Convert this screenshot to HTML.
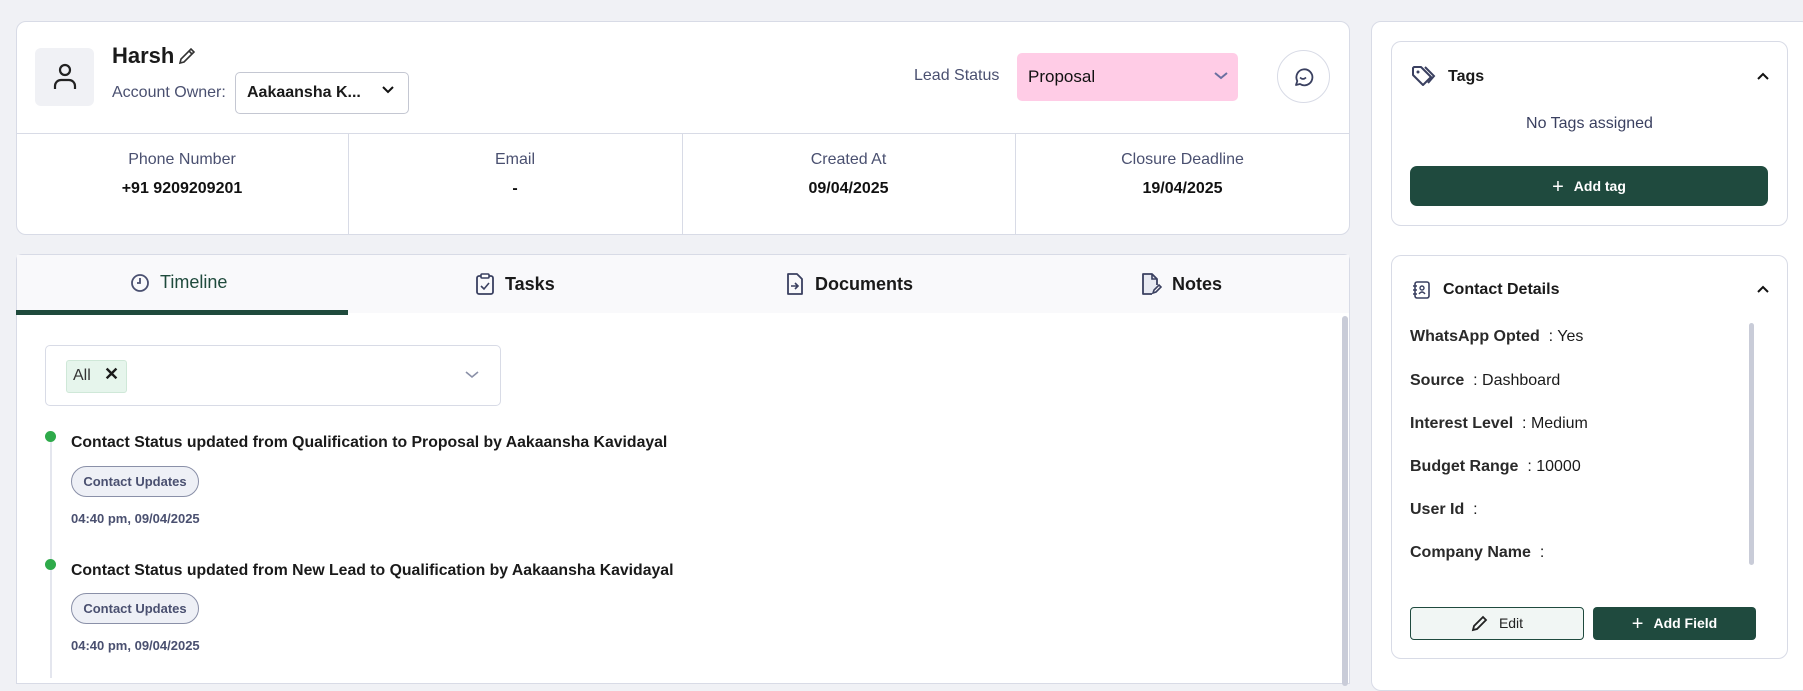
<!DOCTYPE html>
<html><head><meta charset="utf-8"><style>
*{box-sizing:border-box;margin:0;padding:0}
body{width:1803px;height:675px;overflow:hidden;background:#f0f1f5;font-family:"Liberation Sans",sans-serif;position:relative;color:#1a1a1a}
.abs{position:absolute}
.card{position:absolute;background:#fff;border:1px solid #d8dbe6;border-radius:10px}
.lbl{color:#4a5070;font-size:16px}
.val{font-weight:bold;font-size:16px;color:#111}
.stat{position:absolute;top:133px;height:101px;text-align:center}
.tab{position:absolute;top:272px;font-size:18px;font-weight:bold;color:#1a1a1a;display:flex;align-items:center;gap:10px}
.chip{position:absolute;left:71px;width:128px;height:31px;border:1px solid #8a90a8;border-radius:16px;background:#eef0f6;color:#4a5070;font-size:13px;font-weight:bold;text-align:center;line-height:29px}
.ttl{position:absolute;left:71px;font-size:15.8px;font-weight:bold;color:#1a1a1a}
.tm{position:absolute;left:71px;font-size:13px;font-weight:bold;color:#4a5070}
.dot{position:absolute;left:45px;width:11px;height:11px;border-radius:50%;background:#2eaa4a}
.row{position:absolute;left:1410px;font-size:16px;color:#1a1a1a}
.row b{font-weight:bold;color:#2a2a2a}
</style></head><body>
<div class="card" style="left:16px;top:21px;width:1334px;height:214px"></div>
<div class="abs" style="left:16px;top:133px;width:1334px;height:1px;background:#d8dbe6"></div>
<div class="abs" style="left:35px;top:48px;width:59px;height:58px;background:#f0f1f5;border-radius:6px"></div>
<svg class="abs" style="left:52px;top:63px" width="26" height="28" viewBox="0 0 26 28"><circle cx="13" cy="7" r="5" fill="none" stroke="#222" stroke-width="2.2"/><path d="M3 26v-3a6 6 0 0 1 6-6h8a6 6 0 0 1 6 6v3" fill="none" stroke="#222" stroke-width="2.2"/></svg>
<div class="abs" style="left:112px;top:43px;font-size:22px;font-weight:bold;color:#1a1a1a">Harsh</div>
<svg class="abs" style="left:177px;top:46px" width="20" height="20" viewBox="0 0 20 20"><path d="M3 17l1-4L14 3l3 3L7 16z M12 5l3 3" fill="none" stroke="#333" stroke-width="1.6"/></svg>
<div class="abs lbl" style="left:112px;top:84px">Account Owner:</div>
<div class="abs" style="left:235px;top:72px;width:174px;height:42px;border:1px solid #c4c7d2;border-radius:5px"></div>
<div class="abs" style="left:247px;top:84px;font-size:16px;font-weight:bold">Aakaansha K...</div>
<svg class="abs" style="left:381px;top:85px" width="14" height="10" viewBox="0 0 14 10"><path d="M2 2l5 5 5-5" fill="none" stroke="#111" stroke-width="2"/></svg>
<div class="abs lbl" style="left:914px;top:67px">Lead Status</div>
<div class="abs" style="left:1017px;top:53px;width:221px;height:48px;background:#ffcce6;border-radius:5px"></div>
<div class="abs" style="left:1028px;top:67px;font-size:17px;color:#111">Proposal</div>
<svg class="abs" style="left:1213px;top:71px" width="16" height="10" viewBox="0 0 16 10"><path d="M2 2l6 5 6-5" fill="none" stroke="#6a70a0" stroke-width="2"/></svg>
<div class="abs" style="left:1277px;top:50px;width:53px;height:53px;border:1px solid #d8dbe6;border-radius:50%"></div>
<svg class="abs" style="left:1292px;top:66px" width="22" height="22" viewBox="0 0 22 22"><path d="M4 19l1.3-4A8 8 0 1 1 8 18z" fill="none" stroke="#3a4060" stroke-width="1.8" stroke-linejoin="round"/><path d="M8 11.5q3 3 6 0" fill="none" stroke="#3a4060" stroke-width="1.6"/></svg>
<div class="abs" style="left:348px;top:134px;width:1px;height:100px;background:#d8dbe6"></div>
<div class="abs" style="left:682px;top:134px;width:1px;height:100px;background:#d8dbe6"></div>
<div class="abs" style="left:1015px;top:134px;width:1px;height:100px;background:#d8dbe6"></div>
<div class="stat" style="left:16px;width:332px"><div class="lbl" style="margin-top:18px">Phone Number</div><div class="val" style="margin-top:11px">+91 9209209201</div></div>
<div class="stat" style="left:348px;width:334px"><div class="lbl" style="margin-top:18px">Email</div><div class="val" style="margin-top:11px">-</div></div>
<div class="stat" style="left:682px;width:333px"><div class="lbl" style="margin-top:18px">Created At</div><div class="val" style="margin-top:11px">09/04/2025</div></div>
<div class="stat" style="left:1015px;width:335px"><div class="lbl" style="margin-top:18px">Closure Deadline</div><div class="val" style="margin-top:11px">19/04/2025</div></div>

<div class="abs" style="left:16px;top:254px;width:1334px;height:430px;background:#fff;border:1px solid #d8dbe6;border-radius:6px 6px 0 0"></div>
<div class="abs" style="left:17px;top:255px;width:1332px;height:58px;background:#f9f9fb"></div>
<div class="abs" style="left:16px;top:310px;width:332px;height:5px;background:#1f4a3c"></div>
<div class="tab" style="left:130px;color:#1f4a3c;font-weight:normal"><svg width="20" height="20" viewBox="0 0 20 20"><circle cx="10" cy="10" r="8" fill="none" stroke="#4a5070" stroke-width="1.8"/><path d="M10 5v5H7" fill="none" stroke="#4a5070" stroke-width="1.8"/></svg><span style="font-weight:500">Timeline</span></div>
<div class="tab" style="left:475px"><svg width="20" height="24" viewBox="0 0 20 24"><rect x="2" y="4" width="16" height="18" rx="2" fill="none" stroke="#3a4060" stroke-width="1.8"/><rect x="6" y="2" width="8" height="4" rx="1" fill="#fff" stroke="#3a4060" stroke-width="1.6"/><path d="M6 14l3 3 5-6" fill="none" stroke="#3a4060" stroke-width="1.6"/></svg>Tasks</div>
<div class="tab" style="left:785px"><svg width="20" height="24" viewBox="0 0 20 24"><path d="M3 2h9l5 5v15H3z" fill="none" stroke="#3a4060" stroke-width="1.8" stroke-linejoin="round"/><path d="M6 14h7M10 11l3 3-3 3" fill="none" stroke="#3a4060" stroke-width="1.6"/></svg>Documents</div>
<div class="tab" style="left:1140px"><svg width="22" height="24" viewBox="0 0 22 24"><path d="M12 22H3V2h9l5 5v6" fill="#e8eaf2" stroke="#3a4060" stroke-width="1.8" stroke-linejoin="round"/><path d="M12 2v5h5M13 21l1-3 5-5 2 2-5 5z" fill="none" stroke="#3a4060" stroke-width="1.6"/></svg>Notes</div>
<div class="abs" style="left:1342px;top:316px;width:6px;height:370px;background:#c9ccd8;border-radius:3px"></div>
<div class="abs" style="left:45px;top:345px;width:456px;height:61px;border:1px solid #d8dbe6;border-radius:5px"></div>
<div class="abs" style="left:66px;top:360px;width:61px;height:33px;background:#e6f5ec;border:1px solid #cfe8d8;border-radius:3px"></div>
<div class="abs" style="left:73px;top:367px;font-size:16px;color:#333">All</div>
<div class="abs" style="left:104px;top:364px;font-size:18px;font-weight:bold">✕</div>
<svg class="abs" style="left:464px;top:370px" width="16" height="10" viewBox="0 0 16 10"><path d="M2 2l6 5 6-5" fill="none" stroke="#8a90a8" stroke-width="1.6"/></svg>
<div class="abs" style="left:50px;top:438px;width:2px;height:240px;background:#e4e6ee"></div>
<div class="dot" style="top:431px"></div>
<div class="ttl" style="top:434px">Contact Status updated from Qualification to Proposal by Aakaansha Kavidayal</div>
<div class="chip" style="top:466px">Contact Updates</div>
<div class="tm" style="top:511px">04:40 pm, 09/04/2025</div>
<div class="dot" style="top:559px"></div>
<div class="ttl" style="top:562px">Contact Status updated from New Lead to Qualification by Aakaansha Kavidayal</div>
<div class="chip" style="top:593px">Contact Updates</div>
<div class="tm" style="top:638px">04:40 pm, 09/04/2025</div>

<div class="abs" style="left:1371px;top:21px;width:440px;height:670px;background:#fff;border:1px solid #d8dbe6;border-radius:10px"></div>
<div class="card" style="left:1391px;top:41px;width:397px;height:185px"></div>
<svg class="abs" style="left:1411px;top:65px" width="26" height="22" viewBox="0 0 26 22"><path d="M2 3v7l10 10 8-8L10 2H3z" fill="none" stroke="#3a4060" stroke-width="2" stroke-linejoin="round"/><circle cx="7" cy="7" r="1.5" fill="#3a4060"/><path d="M14 2l9 9-6 7" fill="none" stroke="#3a4060" stroke-width="2"/></svg>
<div class="abs" style="left:1448px;top:68px;font-size:16px;font-weight:bold">Tags</div>
<svg class="abs" style="left:1756px;top:72px" width="14" height="9" viewBox="0 0 14 9"><path d="M2 7l5-5 5 5" fill="none" stroke="#111" stroke-width="2"/></svg>
<div class="abs" style="left:1391px;top:115px;width:397px;text-align:center;font-size:16px;color:#3a4060">No Tags assigned</div>
<div class="abs" style="left:1410px;top:166px;width:358px;height:40px;background:#1f4a3e;border-radius:7px;color:#fff;font-size:14px;font-weight:bold;text-align:center;line-height:40px"><span style="font-size:20px;font-weight:normal;vertical-align:-2px;margin-right:10px">+</span>Add tag</div>

<div class="card" style="left:1391px;top:255px;width:397px;height:404px"></div>
<svg class="abs" style="left:1411px;top:280px" width="20" height="20" viewBox="0 0 20 20"><rect x="4" y="2" width="14" height="16" rx="2" fill="none" stroke="#3a4060" stroke-width="1.6"/><circle cx="11" cy="8" r="2" fill="none" stroke="#3a4060" stroke-width="1.4"/><path d="M8 14q3-4 6 0M2 6h4M2 10h4M2 14h4" fill="none" stroke="#3a4060" stroke-width="1.4"/></svg>
<div class="abs" style="left:1443px;top:281px;font-size:16px;font-weight:bold">Contact Details</div>
<svg class="abs" style="left:1756px;top:285px" width="14" height="9" viewBox="0 0 14 9"><path d="M2 7l5-5 5 5" fill="none" stroke="#111" stroke-width="2"/></svg>
<div class="abs" style="left:1749px;top:323px;width:5px;height:242px;background:#c9ccd8;border-radius:3px"></div>
<div class="row" style="top:328px"><b>WhatsApp Opted</b> &nbsp;: Yes</div>
<div class="row" style="top:372px"><b>Source</b> &nbsp;: Dashboard</div>
<div class="row" style="top:415px"><b>Interest Level</b> &nbsp;: Medium</div>
<div class="row" style="top:458px"><b>Budget Range</b> &nbsp;: 10000</div>
<div class="row" style="top:501px"><b>User Id</b> &nbsp;:</div>
<div class="row" style="top:544px"><b>Company Name</b> &nbsp;:</div>
<div class="abs" style="left:1410px;top:607px;width:174px;height:33px;background:#f1f6f4;border:1px solid #1f4a3e;border-radius:4px;font-size:14px;text-align:center;line-height:31px;color:#222"><svg width="18" height="18" viewBox="0 0 18 18" style="vertical-align:-4px;margin-right:10px"><path d="M2 16l1-4 9-9 3 3-9 9z" fill="none" stroke="#222" stroke-width="1.8"/></svg>Edit</div>
<div class="abs" style="left:1593px;top:607px;width:163px;height:33px;background:#1f4a3e;border-radius:4px;font-size:14px;font-weight:bold;text-align:center;line-height:33px;color:#fff"><span style="font-size:20px;font-weight:normal;vertical-align:-2px;margin-right:10px">+</span>Add Field</div>
</body></html>
